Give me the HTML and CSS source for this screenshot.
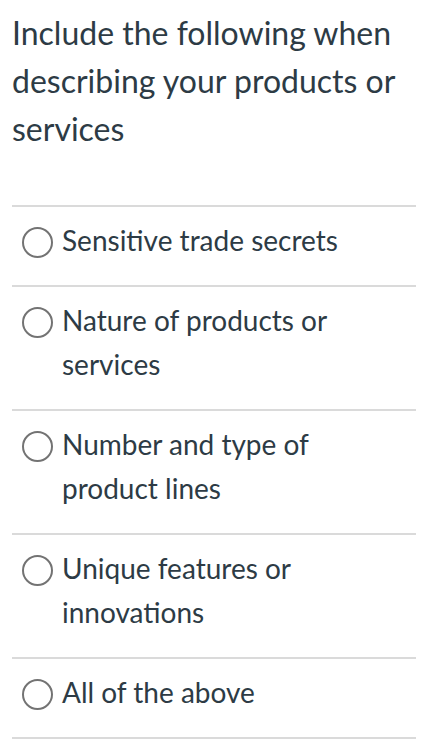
FILE: index.html
```html
<!DOCTYPE html>
<html lang="en">
<head>
<meta charset="utf-8">
<title>Question</title>
<link rel="stylesheet" href="styles.css">
</head>
<body>
<div class="question">
  <p class="prompt">Include the following when describing your products or services</p>
  <div class="answers">
    <label class="option"><span class="radio"></span><span class="text">Sensitive trade secrets</span></label>
    <label class="option"><span class="radio"></span><span class="text">Nature of products or services</span></label>
    <label class="option"><span class="radio"></span><span class="text">Number and type of product lines</span></label>
    <label class="option"><span class="radio"></span><span class="text">Unique features or innovations</span></label>
    <label class="option"><span class="radio"></span><span class="text">All of the above</span></label>
  </div>
</div>
</body>
</html>
```
FILE: styles.css
```css
html, body {
  margin: 0;
  padding: 0;
  background: #ffffff;
}
body {
  font-family: Lato, "Liberation Sans", sans-serif;
  color: #2d3b45;
}
.question {
  padding: 9px 14px 0 12px;
}
.prompt {
  margin: 0 0 52px 0;
  font-size: 32px;
  line-height: 48px;
  padding-right: 10px;
}
.answers {
  border-bottom: 2px solid #dadada;
}
.option {
  display: flex;
  align-items: flex-start;
  gap: 9px;
  padding: 11px 0 23px 10px;
  border-top: 2px solid #dadada;
  font-size: 28px;
  line-height: 44px;
}
.radio {
  flex: none;
  width: 31px;
  height: 31px;
  box-sizing: border-box;
  border: 2px solid #737373;
  border-radius: 50%;
  margin-top: 9px;
}
.text {
  flex: 1;
  padding-right: 50px;
}
```
